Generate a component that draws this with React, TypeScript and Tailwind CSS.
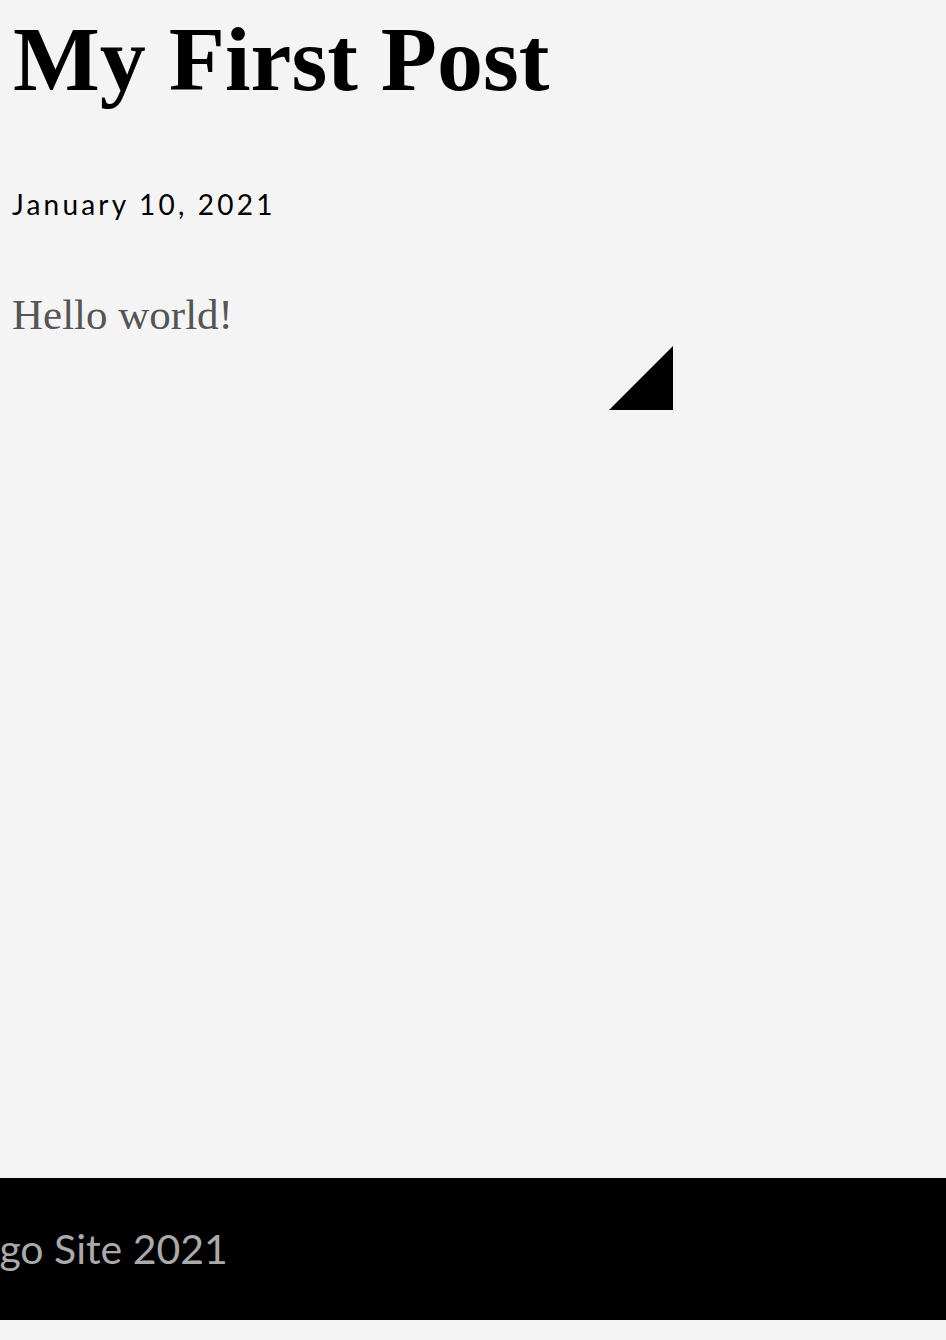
import React from "react";

export default function App() {
  return (
    <div className="relative flex min-h-[1340px] flex-col bg-[#f4f4f4] overflow-hidden">
      <main className="flex-1 px-[12px]">
        <h1 className="mt-[4px] ml-[1px] text-[92px] leading-[110px] font-bold text-black" style={{ fontFamily: '"Liberation Serif", serif' }}>
          My First Post
        </h1>
        <div className="mt-[74px] text-[28px] leading-[32px] tracking-[3.2px] text-black" style={{ fontFamily: 'Lato, sans-serif' }}>
          January 10, 2021
        </div>
        <p className="mt-[71px] text-[43px] leading-[48px] text-[#555555]" style={{ fontFamily: '"Liberation Serif", serif' }}>
          Hello world!
        </p>
      </main>
      <svg className="absolute left-[609px] top-[346px]" width="64" height="64" viewBox="0 0 64 64">
        <polygon points="0,64 64,0 64,64" fill="#000" />
      </svg>
      <footer className="mb-[20px] h-[142px] bg-black flex items-center overflow-hidden">
        <span className="ml-[-99px] whitespace-nowrap text-[41px] text-[#aaaaaa]" style={{ fontFamily: 'Lato, sans-serif' }}>
          © Hugo Site 2021
        </span>
      </footer>
    </div>
  );
}
